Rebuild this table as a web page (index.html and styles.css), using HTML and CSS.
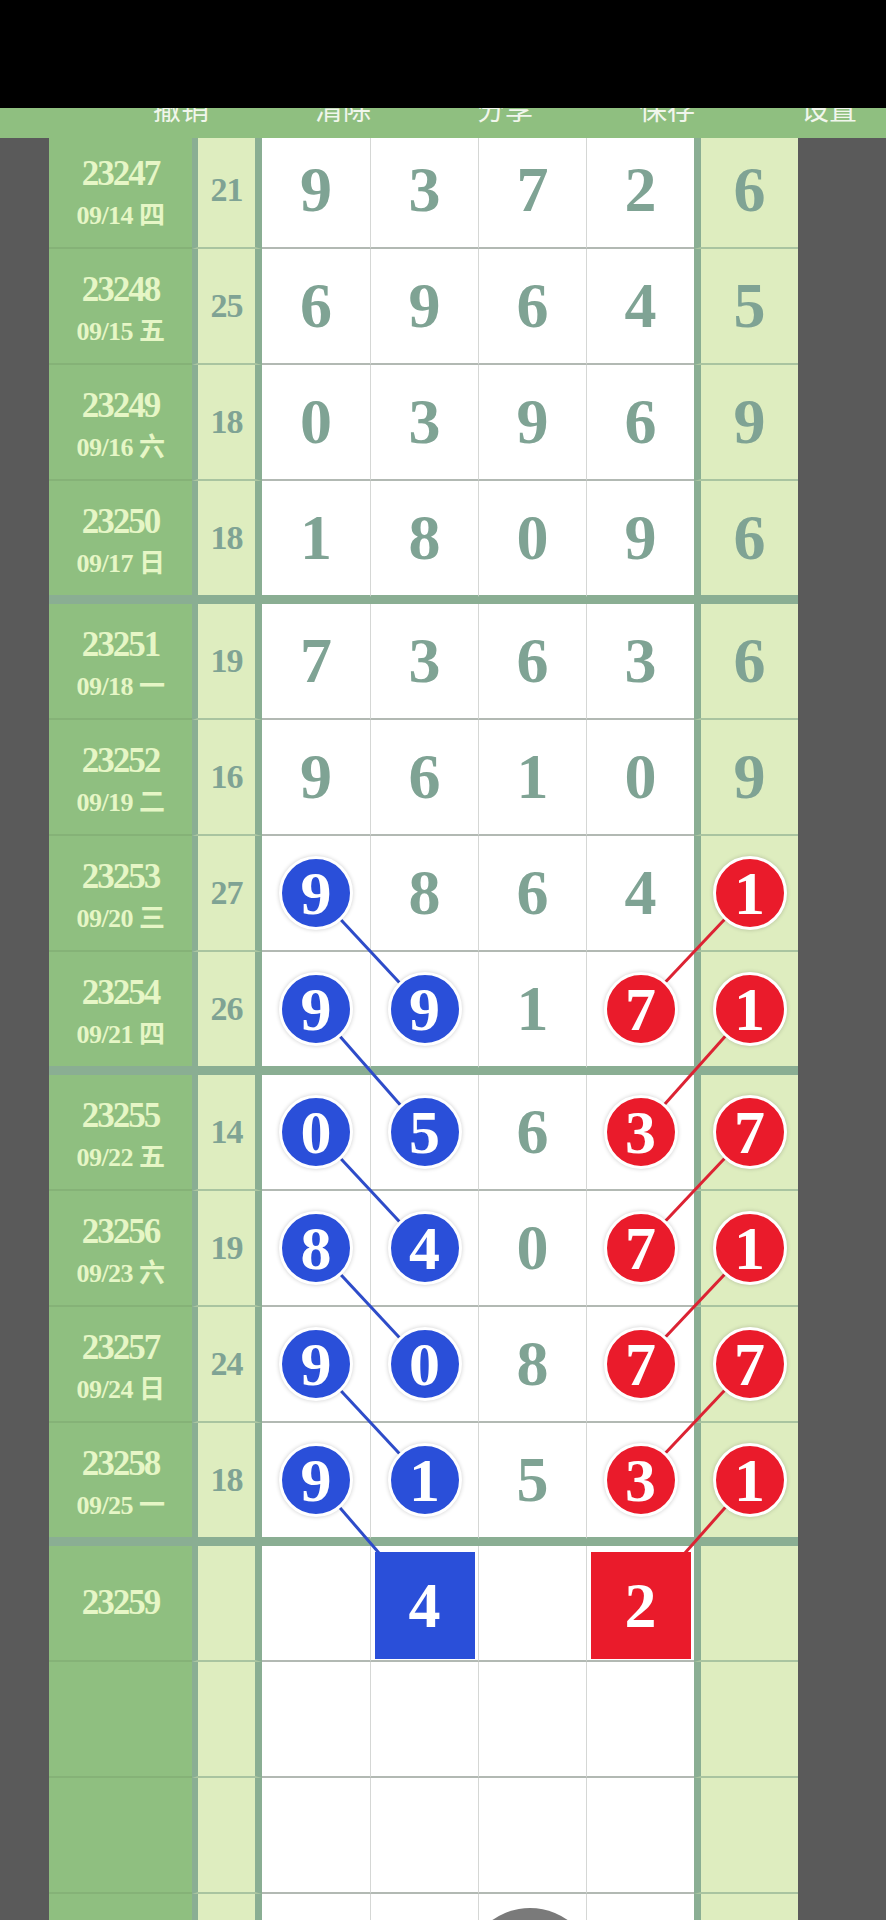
FILE: index.html
```html
<!DOCTYPE html>
<html lang="zh">
<head>
<meta charset="utf-8">
<title>走势图</title>
<link rel="stylesheet" href="styles.css">
</head>
<body>
<div class="statusbar"></div>
<nav class="toolbar">
  <span class="tool">撤销</span>
  <span class="tool">清除</span>
  <span class="tool">分享</span>
  <span class="tool">保存</span>
  <span class="tool">设置</span>
</nav>
<main class="board">
  <section class="group">
    <div class="row">
      <div class="issue"><span class="no">23247</span><span class="date">09/14 四</span></div>
      <div class="sum">21</div>
      <div class="cells"><div class="cell">9</div><div class="cell">3</div><div class="cell">7</div><div class="cell">2</div></div>
      <div class="last">6</div>
    </div>
    <div class="row">
      <div class="issue"><span class="no">23248</span><span class="date">09/15 五</span></div>
      <div class="sum">25</div>
      <div class="cells"><div class="cell">6</div><div class="cell">9</div><div class="cell">6</div><div class="cell">4</div></div>
      <div class="last">5</div>
    </div>
    <div class="row">
      <div class="issue"><span class="no">23249</span><span class="date">09/16 六</span></div>
      <div class="sum">18</div>
      <div class="cells"><div class="cell">0</div><div class="cell">3</div><div class="cell">9</div><div class="cell">6</div></div>
      <div class="last">9</div>
    </div>
    <div class="row">
      <div class="issue"><span class="no">23250</span><span class="date">09/17 日</span></div>
      <div class="sum">18</div>
      <div class="cells"><div class="cell">1</div><div class="cell">8</div><div class="cell">0</div><div class="cell">9</div></div>
      <div class="last">6</div>
    </div>
  </section>
  <section class="group">
    <div class="row">
      <div class="issue"><span class="no">23251</span><span class="date">09/18 一</span></div>
      <div class="sum">19</div>
      <div class="cells"><div class="cell">7</div><div class="cell">3</div><div class="cell">6</div><div class="cell">3</div></div>
      <div class="last">6</div>
    </div>
    <div class="row">
      <div class="issue"><span class="no">23252</span><span class="date">09/19 二</span></div>
      <div class="sum">16</div>
      <div class="cells"><div class="cell">9</div><div class="cell">6</div><div class="cell">1</div><div class="cell">0</div></div>
      <div class="last">9</div>
    </div>
    <div class="row">
      <div class="issue"><span class="no">23253</span><span class="date">09/20 三</span></div>
      <div class="sum">27</div>
      <div class="cells"><div class="cell"><span class="ball b">9</span></div><div class="cell">8</div><div class="cell">6</div><div class="cell">4</div></div>
      <div class="last"><span class="ball r">1</span></div>
    </div>
    <div class="row">
      <div class="issue"><span class="no">23254</span><span class="date">09/21 四</span></div>
      <div class="sum">26</div>
      <div class="cells"><div class="cell"><span class="ball b">9</span></div><div class="cell"><span class="ball b">9</span></div><div class="cell">1</div><div class="cell"><span class="ball r">7</span></div></div>
      <div class="last"><span class="ball r">1</span></div>
    </div>
  </section>
  <section class="group">
    <div class="row">
      <div class="issue"><span class="no">23255</span><span class="date">09/22 五</span></div>
      <div class="sum">14</div>
      <div class="cells"><div class="cell"><span class="ball b">0</span></div><div class="cell"><span class="ball b">5</span></div><div class="cell">6</div><div class="cell"><span class="ball r">3</span></div></div>
      <div class="last"><span class="ball r">7</span></div>
    </div>
    <div class="row">
      <div class="issue"><span class="no">23256</span><span class="date">09/23 六</span></div>
      <div class="sum">19</div>
      <div class="cells"><div class="cell"><span class="ball b">8</span></div><div class="cell"><span class="ball b">4</span></div><div class="cell">0</div><div class="cell"><span class="ball r">7</span></div></div>
      <div class="last"><span class="ball r">1</span></div>
    </div>
    <div class="row">
      <div class="issue"><span class="no">23257</span><span class="date">09/24 日</span></div>
      <div class="sum">24</div>
      <div class="cells"><div class="cell"><span class="ball b">9</span></div><div class="cell"><span class="ball b">0</span></div><div class="cell">8</div><div class="cell"><span class="ball r">7</span></div></div>
      <div class="last"><span class="ball r">7</span></div>
    </div>
    <div class="row">
      <div class="issue"><span class="no">23258</span><span class="date">09/25 一</span></div>
      <div class="sum">18</div>
      <div class="cells"><div class="cell"><span class="ball b">9</span></div><div class="cell"><span class="ball b">1</span></div><div class="cell">5</div><div class="cell"><span class="ball r">3</span></div></div>
      <div class="last"><span class="ball r">1</span></div>
    </div>
  </section>
  <section class="group open">
    <div class="row">
      <div class="issue"><span class="no">23259</span></div>
      <div class="sum"></div>
      <div class="cells"><div class="cell"></div><div class="cell"><span class="sq b">4</span></div><div class="cell"></div><div class="cell"><span class="sq r">2</span></div></div>
      <div class="last"></div>
    </div>
    <div class="row">
      <div class="issue"></div><div class="sum"></div>
      <div class="cells"><div class="cell"></div><div class="cell"></div><div class="cell"></div><div class="cell"></div></div>
      <div class="last"></div>
    </div>
    <div class="row">
      <div class="issue"></div><div class="sum"></div>
      <div class="cells"><div class="cell"></div><div class="cell"></div><div class="cell"></div><div class="cell"></div></div>
      <div class="last"></div>
    </div>
    <div class="row">
      <div class="issue"></div><div class="sum"></div>
      <div class="cells"><div class="cell"></div><div class="cell"></div><div class="cell"></div><div class="cell"></div></div>
      <div class="last"></div>
    </div>
  </section>
  <svg class="links" width="749" height="1900" viewBox="0 0 749 1900" aria-hidden="true">
    <g stroke="#2e4cc9" stroke-width="3" fill="none">
      <line x1="267" y1="760" x2="375" y2="876"/>
      <line x1="267" y1="876" x2="375" y2="999"/>
      <line x1="267" y1="999" x2="375" y2="1115"/>
      <line x1="267" y1="1115" x2="375" y2="1231"/>
      <line x1="267" y1="1231" x2="375" y2="1347"/>
      <line x1="267" y1="1347" x2="330" y2="1420"/>
    </g>
    <g stroke="#dc2333" stroke-width="3" fill="none">
      <line x1="700.5" y1="760" x2="591" y2="876"/>
      <line x1="700.5" y1="876" x2="591" y2="999"/>
      <line x1="700.5" y1="999" x2="591" y2="1115"/>
      <line x1="700.5" y1="1115" x2="591" y2="1231"/>
      <line x1="700.5" y1="1231" x2="591" y2="1347"/>
      <line x1="700.5" y1="1347" x2="636" y2="1420"/>
    </g>
  </svg>
</main>
<div class="fab"></div>
</body>
</html>
```

FILE: styles.css
```css
* {
  box-sizing: border-box;
  margin: 0;
  padding: 0;
}

html,
body {
  background: #5a5a5a;
}

body {
  width: 886px;
  height: 1920px;
  overflow: hidden;
  position: relative;
  font-family: "Liberation Serif", "Noto Sans CJK SC", serif;
}

.statusbar {
  height: 108px;
  background: #000;
}

.toolbar {
  position: relative;
  z-index: 3;
  height: 30px;
  background: #8fbf80;
  display: flex;
  padding-left: 100px;
  overflow: hidden;
}

.tool {
  flex: none;
  width: 162px;
  text-align: center;
  font-family: "Noto Sans CJK SC", sans-serif;
  font-size: 28px;
  line-height: 28px;
  color: #f1f6ec;
  margin-top: -14px;
}

.board {
  position: relative;
  width: 749px;
  margin: -5px 0 0 49px;
}

.group {
  border-bottom: 7px solid #8aae93;
}

.group.open {
  border-bottom: 0;
}

.row {
  display: flex;
  height: 116px;
}

.issue {
  flex: none;
  width: 143px;
  background: #8fbf80;
  border-bottom: 2px solid #85b277;
  display: flex;
  flex-direction: column;
  align-items: center;
  justify-content: center;
  color: #e6f6c6;
  font-weight: bold;
}

.no {
  font-size: 35px;
  line-height: 50px;
  letter-spacing: -2px;
}

.date {
  font-size: 26px;
  line-height: 33px;
  letter-spacing: -0.5px;
}

.sum {
  flex: none;
  width: 70px;
  background: #deedbf;
  border-left: 6px solid #8aae93;
  border-right: 7px solid #8aae93;
  border-bottom: 2px solid #a9c4a0;
  display: flex;
  align-items: center;
  justify-content: center;
  font-size: 34px;
  line-height: 1;
  font-weight: bold;
  letter-spacing: -1px;
  color: #7fa394;
}

.cells {
  flex: none;
  width: 432px;
  display: flex;
}

.cell {
  flex: none;
  width: 108px;
  background: #fff;
  border-bottom: 2px solid #b2b9b3;
  display: flex;
  align-items: center;
  justify-content: center;
  font-size: 64px;
  line-height: 1;
  font-weight: bold;
  color: #7fa394;
}

.cell + .cell {
  border-left: 1px solid #d5d7d5;
}

.last {
  flex: none;
  width: 104px;
  background: #deedbf;
  border-left: 7px solid #8aae93;
  border-bottom: 2px solid #a9c4a0;
  display: flex;
  align-items: center;
  justify-content: center;
  font-size: 64px;
  line-height: 1;
  font-weight: bold;
  color: #7fa394;
}

.group:not(.open) .row:last-child > *,
.group:not(.open) .row:last-child .cell {
  border-bottom-color: #8aae93;
}

.ball {
  position: relative;
  z-index: 2;
  width: 74px;
  height: 74px;
  border-radius: 50%;
  border: 3px solid #fff;
  box-shadow: 0 0 4px rgba(0, 0, 0, 0.2);
  display: flex;
  align-items: center;
  justify-content: center;
  color: #fff;
  font-size: 62px;
  line-height: 1;
}

.ball.b {
  background: #2a4fd9;
}

.ball.r {
  background: #ea1b2b;
}

.sq {
  position: relative;
  z-index: 2;
  align-self: flex-start;
  margin-top: 6px;
  width: 100px;
  height: 107px;
  display: flex;
  align-items: center;
  justify-content: center;
  color: #fff;
  font-size: 64px;
  line-height: 1;
}

.sq.b {
  background: #2a4fd9;
}

.sq.r {
  background: #ea1b2b;
}

.links {
  position: absolute;
  left: 0;
  top: 0;
  z-index: 1;
  pointer-events: none;
}

.fab {
  position: absolute;
  left: 465px;
  top: 1908px;
  width: 130px;
  height: 130px;
  border-radius: 50%;
  background: #7a7a7a;
}
```
